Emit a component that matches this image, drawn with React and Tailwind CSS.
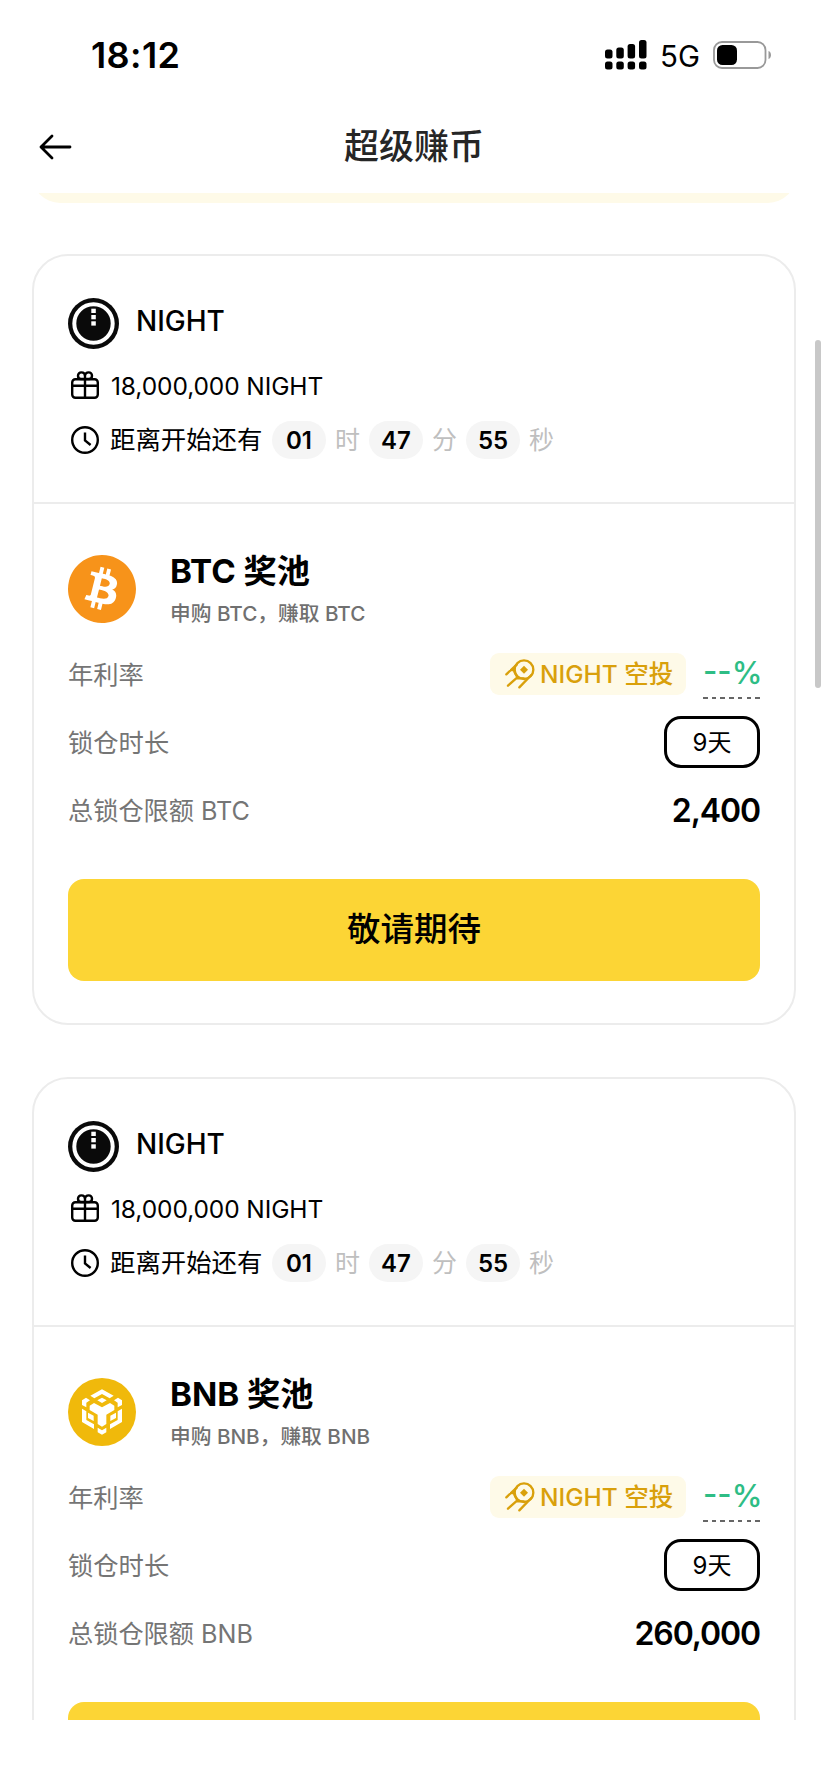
import { SiBitcoin } from "react-icons/si";

const pools = [
    { coin: "BTC", limit: "2,400", Logo: BtcLogo, action: "敬请期待" },
    { coin: "BNB", limit: "260,000", Logo: BnbLogo },
];

const countdown = [
    { value: "01", unit: "时" },
    { value: "47", unit: "分" },
    { value: "55", unit: "秒" },
];

function BtcLogo() {
    return (
        <div className="flex h-[68px] w-[68px] items-center justify-center rounded-full bg-[radial-gradient(circle,#fff_60%,transparent_61%)]">
            <SiBitcoin className="h-[68px] w-[68px] text-[#f7931a]" />
        </div>
    );
}

function BnbLogo() {
    return (
        <svg viewBox="0 0 204 204" className="h-[68px] w-[68px]">
            <circle cx="102" cy="102" r="102" fill="#f0b90b" />
            <g fill="#fff">
                <path d="M102 34l35 19-12 8-23-13-23 13-12-8z" />
                <path d="M102 59l14 8-14 8-14-8z" />
                <path d="M42 67l12-8 12 8-11 7v14l-13-7z" />
                <path d="M162 67l-12-8-12 8 11 7v14l13-7z" />
                <path d="M78 75l24 13 24-13 13 8v13l-24 14v28l-13 8-13-8v-28L65 96V83z" />
                <path d="M42 92l13 8v26l23 13v14l-36-21z" />
                <path d="M162 92l-13 8v26l-23 13v14l36-21z" />
                <path d="M60 104l17 9v16l-17-9z" />
                <path d="M144 104l-17 9v16l17-9z" />
                <path d="M89 149l13 8 13-8v14l-13 7-13-7z" />
            </g>
        </svg>
    );
}

function NightLogo() {
    return (
        <svg viewBox="0 0 51 51" className="h-[51px] w-[51px]">
            <circle cx="25.5" cy="25.5" r="25.5" fill="#0a0a0a" />
            <circle cx="25.5" cy="25.5" r="19.2" fill="none" stroke="#fff" strokeWidth="4" />
            <g fill="#fff">
                <rect x="23.3" y="10.7" width="4.500" height="4.300" />
                <rect x="23.3" y="17" width="4.500" height="4.300" />
                <rect x="23.3" y="23.300" width="4.500" height="4.300" />
            </g>
        </svg>
    );
}

function GiftIcon() {
    return (
        <svg viewBox="0 0 28 28" className="h-7 w-7" fill="none" stroke="#000" strokeWidth="2.400">
            <rect x="1.2" y="8.2" width="25.6" height="18.600" rx="3.200" />
            <path d="M1 14.800h26M14 8v19" />
            <path d="M14 8H10C8 8 7 6.500 7 4.800 7 2.800 8.400 1.400 10.300 1.400 12.600 1.400 14 3 14 5zM14 8h4c2 0 3-1.500 3-3.200 0-2-1.400-3.400-3.300-3.400C15.400 1.400 14 3 14 5z" />
        </svg>
    );
}

function ClockIcon() {
    return (
        <svg viewBox="0 0 28 28" className="h-7 w-7" fill="none" stroke="#000" strokeWidth="2.400">
            <circle cx="14" cy="14" r="12.800" />
            <path d="M14 6.500v8l5.600 4.500" />
        </svg>
    );
}

function AirdropIcon() {
    return (
        <svg viewBox="0 0 90 90" className="h-[30px] w-[30px] shrink-0" fill="none" stroke="#d9a00b" strokeWidth="7" strokeLinecap="round">
            <circle cx="57" cy="32" r="28" />
            <path d="M4 46l31-29M18 33h10M28 38l10 19M9 80l28-25M37 58h19M43 85l36-37" />
            <path d="M57 20l12 12-12 12-12-12z" fill="#d9a00b" stroke="none" />
        </svg>
    );
}

function StatusBar() {
    return (
        <div className="flex h-[110px] items-center justify-between pr-[56px] pl-[91px]">
            <span className="text-[36px] font-semibold tracking-[0.4px] text-black">18:12</span>
            <div className="flex items-center">
                <svg viewBox="0 0 42 30" className="h-[30px] w-[42px]">
                    <rect x="0" y="9.500" width="7.500" height="9" rx="2.500" />
                    <rect x="11.300" y="7.500" width="7.500" height="11" rx="2.500" />
                    <rect x="22.600" y="4" width="7.500" height="14.500" rx="2.500" />
                    <rect x="34" y="0" width="7.500" height="18.500" rx="2.500" />
                    <rect x="0" y="21.500" width="7.500" height="8" rx="2.500" />
                    <rect x="11.300" y="21.500" width="7.500" height="8" rx="2.500" />
                    <rect x="22.600" y="21.500" width="7.500" height="8" rx="2.500" />
                    <rect x="34" y="21.500" width="7.500" height="8" rx="2.500" />
                </svg>
                <span className="ml-[13px] pt-[2px] text-[29.5px] text-black">5G</span>
                <svg viewBox="0 0 59 28" className="ml-[13px] h-7 w-[59px]">
                    <rect x="1" y="1" width="51.500" height="26" rx="8" fill="none" stroke="#999" strokeWidth="1.800" />
                    <rect x="4" y="4" width="20" height="20" rx="5.500" />
                    <path d="M55.500 10c3.300 1 3.300 7 0 8z" fill="#999" />
                </svg>
            </div>
        </div>
    );
}

function PoolCard({ coin, limit, Logo, action }) {
    return (
        <div className="h-[771px] shrink-0 rounded-[36px] border-2 border-[#ececec] bg-white">
            <div className="h-[248px] border-b-2 border-[#ececec] px-[34px] pt-[42px]">
                <div className="flex h-[51px]">
                    <NightLogo />
                    <span className="ml-[17px] text-[28px] leading-[46px] font-medium">NIGHT</span>
                </div>
                <div className="mt-[17px] flex h-[38px] items-center pl-[3px]">
                    <GiftIcon />
                    <span className="ml-3 pt-[2px] text-[24.5px] tracking-[-0.1px]">18,000,000 NIGHT</span>
                </div>
                <div className="mt-[17px] flex h-[38px] items-center pl-[3px]">
                    <ClockIcon />
                    <span className="ml-[11px] w-[162px] pt-px text-[25.4px] whitespace-nowrap">距离开始还有</span>
                    {countdown.map((item) => (
                        <div key={item.unit} className="flex w-[97px] items-center">
                            <span className="flex h-[38px] w-[54px] items-center justify-center rounded-full bg-[#f5f5f5] pt-px text-[24px] font-semibold">
                                {item.value}
                            </span>
                            <span className="ml-[9px] pt-px text-[25px] text-[#bfbfbf]">{item.unit}</span>
                        </div>
                    ))}
                </div>
            </div>

            <div className="px-[34px] pt-[51px]">
                <div className="flex h-[68px]">
                    <Logo />
                    <div className="ml-[34px] flex flex-col">
                        <span className="-mt-1 text-[33.2px] leading-[40px] font-bold">{coin} 奖池</span>
                        <span className="mt-[11px] text-[20.7px] leading-[24px] font-medium text-[#707070]">
                            申购 {coin}，赚取 {coin}
                        </span>
                    </div>
                </div>

                <div className="mt-[30px] flex h-[42px] items-center justify-between">
                    <span className="pt-px text-[25.3px] text-[#757575]">年利率</span>
                    <div className="flex items-center">
                        <div className="flex h-[42px] w-[196px] items-center rounded-[9px] bg-[#fefae8] pl-[15px] text-[#d9a00b]">
                            <AirdropIcon />
                            <span className="ml-[5px] text-[24.5px] font-medium whitespace-nowrap">NIGHT 空投</span>
                        </div>
                        <div className="ml-[17px] flex h-[50px] w-[57px] flex-col justify-between">
                            <span className="text-right text-[31px] leading-[48px] font-medium whitespace-nowrap text-[#2ebd85]">--%</span>
                            <span className="h-[2px] w-full shrink-0 bg-[repeating-linear-gradient(90deg,#666_0_4.500px,transparent_4.500px_8.700px)]" />
                        </div>
                    </div>
                </div>

                <div className="mt-[21px] flex h-[52px] items-center justify-between">
                    <span className="pt-px text-[25.3px] text-[#757575]">锁仓时长</span>
                    <span className="flex h-[52px] w-[96px] items-center justify-center rounded-[17px] border-[3px] border-black pt-px text-[24px]">
                        9天
                    </span>
                </div>

                <div className="mt-[23px] flex h-[40px] items-center justify-between">
                    <span className="pt-px text-[25.2px] text-[#757575]">总锁仓限额 {coin}</span>
                    <span className="text-[32px] font-semibold tracking-[-1.1px]">{limit}</span>
                </div>

                <button className="mt-[48px] h-[102px] w-full rounded-[16px] bg-[#fcd535] pb-[2px] text-[33.500px] font-medium">
                    {action}
                </button>
            </div>
        </div>
    );
}

export default function App() {
    return (
        <div className="relative h-[1792px] w-[828px] overflow-hidden bg-white font-['Inter','Noto_Sans_CJK_SC',sans-serif] text-black">
            <StatusBar />

            <header className="grid h-[83px] grid-cols-3 items-center px-[39px] pb-[10px]">
                <svg viewBox="0 0 33 26" className="h-[26px] w-[33px]" fill="none" stroke="#000" strokeWidth="2.800" strokeLinecap="round" strokeLinejoin="round">
                    <path d="M31 13H2M13 2L2 13l11 11" />
                </svg>
                <h1 className="text-center text-[35px] font-medium text-[#262626]">超级赚币</h1>
            </header>

            <main className="flex h-[1527px] flex-col overflow-hidden px-8">
                <div className="-mt-[50px] h-[60px] shrink-0 rounded-b-[28px] bg-[#fefae8]" />
                <div className="mt-[51px] flex flex-col gap-[52px]">
                    {pools.map((pool) => (
                        <PoolCard key={pool.coin} {...pool} />
                    ))}
                </div>
            </main>

            {/* scroll indicator */}
            <div className="absolute top-[340px] right-[7px] h-[348px] w-[6px] rounded-full bg-[#c8c8c8]" />
        </div>
    );
}
